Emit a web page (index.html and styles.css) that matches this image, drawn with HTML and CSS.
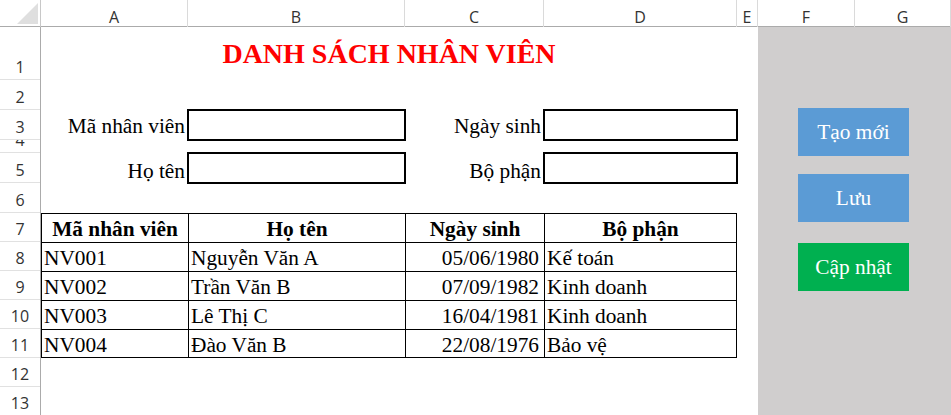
FILE: index.html
```html
<!DOCTYPE html>
<html lang="vi">
<head>
<meta charset="utf-8">
<title>Danh sách nhân viên</title>
<link rel="stylesheet" href="styles.css">
</head>
<body>
<div class="app">
  <div class="colbar">
    <div class="corner">
      <svg class="corner-icon" width="41" height="27" viewBox="0 0 41 27"><polygon points="38,3 38,24 17,24" fill="#dfdfdf"/></svg>
    </div>
    <div class="colhead">A</div>
    <div class="colhead">B</div>
    <div class="colhead">C</div>
    <div class="colhead">D</div>
    <div class="colhead">E</div>
    <div class="colhead">F</div>
    <div class="colhead">G</div>
  </div>
  <div class="main">
    <div class="rowbar">
      <div class="rownum h53">1</div>
      <div class="rownum h30">2</div>
      <div class="rownum h30">3</div>
      <div class="rownum h13">4</div>
      <div class="rownum h30">5</div>
      <div class="rownum h30">6</div>
      <div class="rownum h29">7</div>
      <div class="rownum h29">8</div>
      <div class="rownum h29">9</div>
      <div class="rownum h29">10</div>
      <div class="rownum h29">11</div>
      <div class="rownum h29">12</div>
      <div class="rownum h29">13</div>
    </div>
    <div class="cells">
      <div class="left">
        <div class="title">DANH SÁCH NHÂN VIÊN</div>
        <div class="spacer h30"></div>
        <div class="form form-first">
          <div class="label">Mã nhân viên</div>
          <div class="input"></div>
          <div class="label">Ngày sinh</div>
          <div class="input"></div>
        </div>
        <div class="spacer h13"></div>
        <div class="form form-second">
          <div class="label">Họ tên</div>
          <div class="input"></div>
          <div class="label">Bộ phận</div>
          <div class="input"></div>
        </div>
        <div class="spacer h30"></div>
        <div class="table">
          <div class="cell th">Mã nhân viên</div>
          <div class="cell th">Họ tên</div>
          <div class="cell th">Ngày sinh</div>
          <div class="cell th">Bộ phận</div>

          <div class="cell">NV001</div>
          <div class="cell">Nguyễn Văn A</div>
          <div class="cell num">05/06/1980</div>
          <div class="cell">Kế toán</div>

          <div class="cell">NV002</div>
          <div class="cell">Trần Văn B</div>
          <div class="cell num">07/09/1982</div>
          <div class="cell">Kinh doanh</div>

          <div class="cell">NV003</div>
          <div class="cell">Lê Thị C</div>
          <div class="cell num">16/04/1981</div>
          <div class="cell">Kinh doanh</div>

          <div class="cell">NV004</div>
          <div class="cell">Đào Văn B</div>
          <div class="cell num">22/08/1976</div>
          <div class="cell">Bảo vệ</div>
        </div>
      </div>
      <div class="panel">
        <div class="btn btn-blue">Tạo mới</div>
        <div class="btn btn-blue">Lưu</div>
        <div class="btn btn-green">Cập nhật</div>
      </div>
    </div>
  </div>
</div>
</body>
</html>
```
FILE: styles.css
```css
* {
  box-sizing: border-box;
  margin: 0;
  padding: 0;
}

body {
  margin: 0;
  width: 951px;
  height: 415px;
  overflow: hidden;
  background: #ffffff;
  font-family: "Liberation Serif", "Times New Roman", serif;
  color: #000;
}

.app {
  width: 951px;
}

/* column header bar */
.colbar {
  display: grid;
  grid-template-columns: 41px 147px 217px 139px 193px 21px 97px 96px;
  height: 27px;
  border-bottom: 1px solid #ababab;
}

.corner {
  border-right: 1px solid #c8c8c8;
}

.corner-icon {
  display: block;
}

.colhead {
  display: flex;
  justify-content: center;
  align-items: flex-end;
  border-right: 1px solid #dadada;
  font-family: "Open Sans", "Noto Sans", sans-serif;
  font-size: 16px;
  line-height: 20px;
  color: #333;
}

/* body */
.main {
  display: grid;
  grid-template-columns: 41px 910px;
}

.rowbar {
  display: flex;
  flex-direction: column;
  border-right: 1px solid #ababab;
}

.rownum {
  display: flex;
  justify-content: center;
  align-items: flex-end;
  overflow: hidden;
  border-bottom: 1px solid #e1e1e1;
  padding-bottom: 2px;
  font-family: "Open Sans", "Noto Sans", sans-serif;
  font-size: 16px;
  line-height: 20px;
  color: #333;
  flex: none;
}

.h53 { height: 53px; }
.h30 { height: 30px; }
.h29 { height: 29px; }
.h13 { height: 13px; }

.cells {
  display: grid;
  grid-template-columns: 717px 193px;
}

.left {
  display: flex;
  flex-direction: column;
}

.spacer {
  flex: none;
}

.title {
  height: 53px;
  width: 696px;
  display: flex;
  align-items: center;
  justify-content: center;
  font-weight: bold;
  font-size: 28px;
  line-height: 32px;
  color: #ff0000;
}

.form {
  display: grid;
  grid-template-columns: 147px 217px 139px 193px;
  height: 30px;
}

.label {
  display: flex;
  justify-content: flex-end;
  align-items: flex-end;
  padding-right: 3px;
  font-size: 21.33px;
  line-height: 24px;
  white-space: nowrap;
}

.form-first .label {
  padding-bottom: 2px;
}

.form-second .label {
  padding-bottom: 0;
}

.input {
  border: 2px solid #000;
  margin: -1px;
}

/* data table */
.table {
  display: grid;
  grid-template-columns: 147px 217px 139px 193px;
  grid-auto-rows: 29px;
  width: 696px;
}

.cell {
  display: flex;
  align-items: flex-end;
  border-left: 1px solid #000;
  border-top: 1px solid #000;
  padding: 0 4px 1px 2px;
  font-size: 21.33px;
  line-height: 24px;
  white-space: nowrap;
}

.cell:nth-child(4n) {
  border-right: 1px solid #000;
}

.cell:nth-last-child(-n+4) {
  border-bottom: 1px solid #000;
  padding-bottom: 0;
}

.th {
  justify-content: center;
  font-weight: bold;
  padding-left: 0;
  padding-right: 0;
}

.num {
  justify-content: flex-end;
  padding-right: 5px;
}

/* button panel */
.panel {
  background: #d0cece;
  display: flex;
  flex-direction: column;
  align-items: flex-start;
  gap: 18px;
  padding: 81px 0 0 40px;
}

.btn {
  width: 111px;
  height: 48px;
  display: flex;
  align-items: center;
  justify-content: center;
  color: #ffffff;
  font-size: 21.33px;
  line-height: 24px;
}

.btn-blue {
  background: #5b9bd5;
}

.btn-green {
  background: #00b050;
  margin-top: 3px;
}
```
